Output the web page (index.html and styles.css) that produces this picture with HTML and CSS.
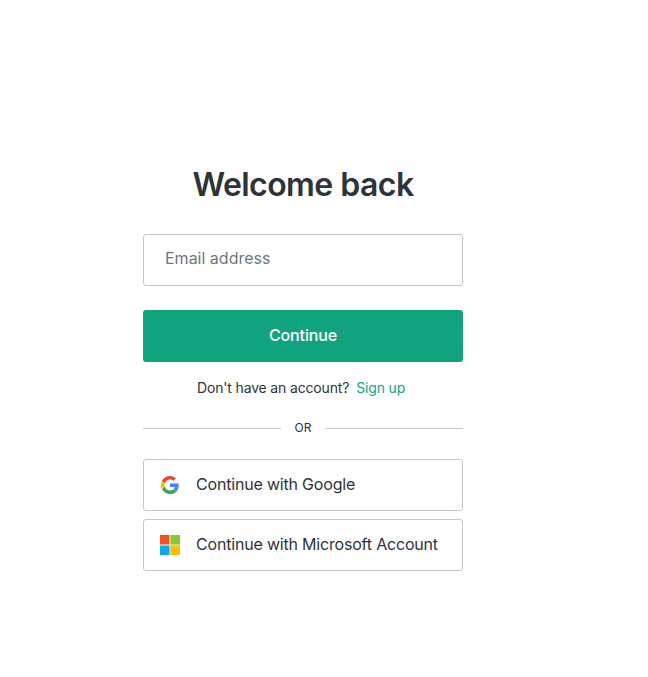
FILE: index.html
```
<!DOCTYPE html>
<html lang="en">
<head>
<meta charset="utf-8">
<title>Welcome back</title>
<link rel="stylesheet" href="styles.css">
</head>
<body>
<main class="login">
  <h1 class="title">Welcome back</h1>
  <form class="form">
    <input class="email" type="email" placeholder="Email address" aria-label="Email address">
    <button class="submit" type="button">Continue</button>
  </form>
  <p class="signup"><span class="question">Don't have an account?</span><a class="link" href="#">Sign up</a></p>
  <div class="divider"><span class="or">OR</span></div>
  <div class="providers">
    <button class="provider" type="button">
      <svg class="icon" viewBox="-2.4 -2.4 52.8 52.8"><path fill="#EA4335" d="M24 9.5c3.54 0 6.71 1.22 9.21 3.6l6.85-6.85C35.9 2.38 30.47 0 24 0 14.62 0 6.51 5.38 2.56 13.22l7.98 6.19C12.43 13.72 17.74 9.5 24 9.5z"/><path fill="#4285F4" d="M46.98 24.55c0-1.57-.15-3.09-.38-4.55H24v9.02h12.94c-.58 2.96-2.26 5.48-4.78 7.18l7.73 6c4.51-4.18 7.09-10.36 7.09-17.65z"/><path fill="#FBBC05" d="M10.53 28.59c-.48-1.45-.76-2.99-.76-4.59s.27-3.14.76-4.59l-7.98-6.19C.92 16.46 0 20.12 0 24s.92 7.54 2.56 10.78l7.97-6.19z"/><path fill="#34A853" d="M24 48c6.48 0 11.93-2.13 15.89-5.81l-7.73-6c-2.15 1.45-4.92 2.3-8.16 2.3-6.26 0-11.57-4.22-13.47-9.91l-7.98 6.19C6.51 42.62 14.62 48 24 48z"/></svg>
      <span class="label">Continue with Google</span>
    </button>
    <button class="provider" type="button">
      <svg class="icon" viewBox="0 0 20 20"><path fill="#d9dfae" d="M0 9h20v2H0zM9 0h2v20H9z"/><path fill="#f4511e" d="M0 0h9.3v9.3H0z"/><path fill="#81cc2a" d="M10.7 0H20v9.3h-9.3z"/><path fill="#05a9f3" d="M0 10.7h9.3V20H0z"/><path fill="#fcbc0b" d="M10.7 10.7H20V20h-9.3z"/></svg>
      <span class="label">Continue with Microsoft Account</span>
    </button>
  </div>
</main>
</body>
</html>
```
FILE: styles.css
```
* { box-sizing: border-box; }
body { margin: 0; background: #fff; color: #2d333a; font-family: Inter, "Liberation Sans", sans-serif; }
.login { width: 320px; margin: 165px 0 0 143px; }
.title { margin: 0 0 29px; font-size: 32px; line-height: 40px; font-weight: 600; letter-spacing: -0.55px; text-align: center; }
.form { display: flex; flex-direction: column; gap: 24px; }
.email { width: 100%; height: 52px; padding: 0 21px 4px; border: 1px solid #c2c8d0; border-radius: 3px; font: 16px Inter, sans-serif; }
.email::placeholder { color: #6f7780; opacity: 1; }
.submit { height: 52px; padding: 0 0 2px; border: 0; border-radius: 3px; background: #10a37f; color: #fff; font: 500 16px Inter, sans-serif; letter-spacing: -0.15px; }
.signup { display: flex; gap: 7px; margin: 16px 0 0 54px; font-size: 14px; line-height: 20px; letter-spacing: -0.16px; white-space: nowrap; }
.link { color: #10a37f; text-decoration: none; }
.divider { display: flex; align-items: center; margin-top: 22px; height: 16px; font-size: 12px; }
.divider::before, .divider::after { content: ""; flex: 1; height: 1px; background: #c2c8d0; }
.or { width: 44px; padding-bottom: 2px; text-align: center; }
.providers { display: flex; flex-direction: column; gap: 8px; margin-top: 23px; }
.provider { display: flex; align-items: center; gap: 16px; height: 52px; padding: 0 16px; border: 1px solid #c2c8d0; border-radius: 3px; background: #fff; color: #2d333a; font: 16px Inter, sans-serif; letter-spacing: -0.19px; white-space: nowrap; }
.icon { width: 20px; height: 20px; flex: none; }
.label { padding-bottom: 2px; }
```
